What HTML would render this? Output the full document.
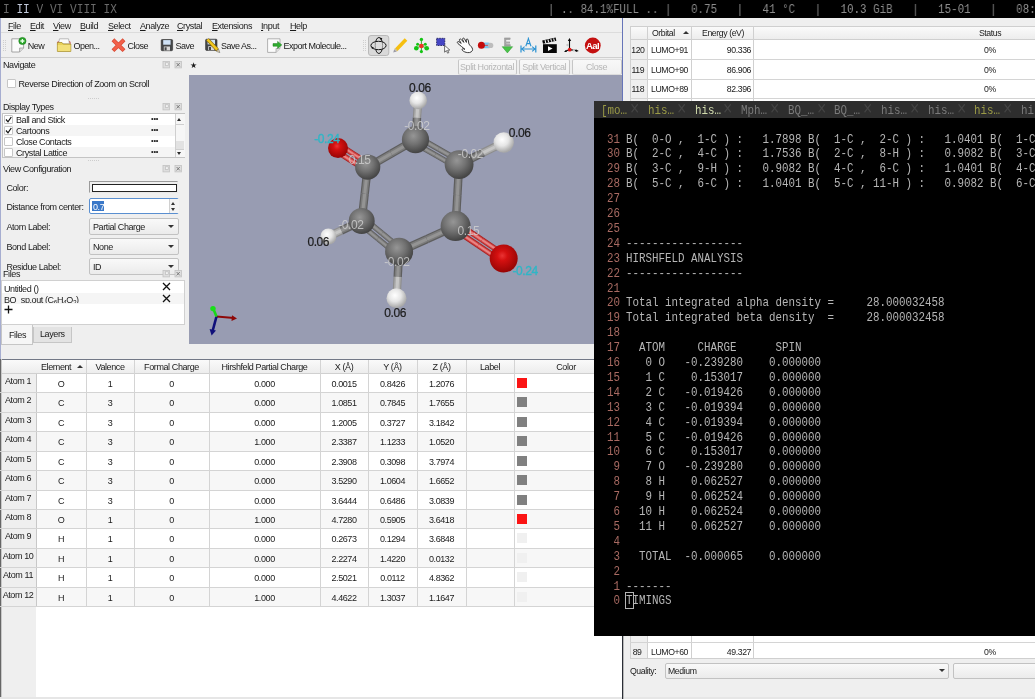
<!DOCTYPE html>
<html><head><meta charset="utf-8"><title>Avogadro</title>
<style>
html,body{margin:0;padding:0}
body{width:1035px;height:699px;position:relative;overflow:hidden;background:#efefef;font-family:"Liberation Sans",sans-serif;font-size:9px;letter-spacing:-0.4px;color:#1a1a1a}
.a{position:absolute;white-space:nowrap}
.t{position:absolute;white-space:nowrap;line-height:12px}
.mono{font-family:"Liberation Mono",monospace;letter-spacing:0}
u{text-decoration:underline;text-underline-offset:1px}
.hl{position:absolute;height:1px;background:#d4d4d4}
.vl{position:absolute;width:1px;background:#d4d4d4}
.btn{position:absolute;border:1px solid #c2c2c2;border-radius:2px;background:linear-gradient(#f9f9f9,#ebebeb);box-sizing:border-box}
.cb{position:absolute;width:9px;height:9px;border:1px solid #c6c6c6;background:#fff;border-radius:1px}
.dk{position:absolute;width:6px;height:6px;border:1px solid #c8c8c8;background:#e4e4e4;box-sizing:border-box}
</style></head><body>
<div id="root" style="position:absolute;left:0;top:0;width:1035px;height:699px;will-change:transform">

<div class="a" style="left:0;top:0;width:1035px;height:18px;background:#000"></div>
<div class="a mono" id="tb1" style="left:2.8px;top:1.6px;font-size:13.5px;line-height:15px;color:#6a6a6a;transform-origin:0 0;transform:scaleX(.827);white-space:pre">I <span style="color:#c2cadb">II</span> V VI VIII IX</div>
<div class="a mono" id="tb2" style="left:548px;top:1.6px;font-size:13.5px;line-height:15px;color:#8c8c8c;transform-origin:0 0;transform:scaleX(.8025);white-space:pre">| .. 84.1%FULL .. |   0.75   |   41 °C   |   10.3 GiB   |   15-01   |   08:</div>
<div class="a" style="left:623px;top:18px;width:412px;height:681px;background:#efefef"></div>
<div class="a" style="left:630px;top:26px;width:405px;height:633px;background:#fff"></div>
<div class="a" style="left:630px;top:26px;width:405px;height:14px;background:linear-gradient(#fafafa,#ededed);border-top:1px solid #cfcfcf;border-bottom:1px solid #cfcfcf;box-sizing:border-box"></div>
<div class="vl" style="left:630px;top:26px;height:633px;background:#d0d0d0"></div>
<div class="vl" style="left:647px;top:26px;height:633px;background:#d0d0d0"></div>
<div class="vl" style="left:691px;top:26px;height:633px;background:#d0d0d0"></div>
<div class="vl" style="left:753px;top:26px;height:633px;background:#d0d0d0"></div>
<div class="a" style="left:631px;top:40px;width:16px;height:619px;background:#efefef"></div>
<div class="hl" style="left:630px;top:59px;width:405px"></div>
<div class="t" style="left:629.4px;width:17px;text-align:center;top:44px;font-size:8.7px">120</div>
<div class="t" style="left:651px;top:44px;font-size:8.7px">LUMO+91</div>
<div class="t" style="left:691px;top:44px;width:60px;text-align:right;font-size:8.7px">90.336</div>
<div class="t" style="left:970px;top:44px;width:40px;text-align:center;font-size:8.7px">0%</div>
<div class="hl" style="left:630px;top:78.5px;width:405px"></div>
<div class="t" style="left:629.4px;width:17px;text-align:center;top:63.5px;font-size:8.7px">119</div>
<div class="t" style="left:651px;top:63.5px;font-size:8.7px">LUMO+90</div>
<div class="t" style="left:691px;top:63.5px;width:60px;text-align:right;font-size:8.7px">86.906</div>
<div class="t" style="left:970px;top:63.5px;width:40px;text-align:center;font-size:8.7px">0%</div>
<div class="hl" style="left:630px;top:97.5px;width:405px"></div>
<div class="t" style="left:629.4px;width:17px;text-align:center;top:82.5px;font-size:8.7px">118</div>
<div class="t" style="left:651px;top:82.5px;font-size:8.7px">LUMO+89</div>
<div class="t" style="left:691px;top:82.5px;width:60px;text-align:right;font-size:8.7px">82.396</div>
<div class="t" style="left:970px;top:82.5px;width:40px;text-align:center;font-size:8.7px">0%</div>
<div class="t" style="left:652px;top:27px;font-size:8.7px">Orbital</div>
<div class="a" style="left:683px;top:31px;width:0;height:0;border-left:3px solid transparent;border-right:3px solid transparent;border-bottom:3px solid #333"></div>
<div class="t" style="left:702px;top:27px;font-size:8.7px">Energy (eV)</div>
<div class="t" style="left:970px;top:27px;width:40px;text-align:center;font-size:8.7px">Status</div>
<div class="hl" style="left:630px;top:642px;width:405px"></div>
<div class="hl" style="left:630px;top:658px;width:405px;background:#cfcfcf"></div>
<div class="t" style="left:628.6px;width:17px;text-align:center;top:646px;font-size:8.7px">89</div>
<div class="t" style="left:651px;top:646px;font-size:8.7px">LUMO+60</div>
<div class="t" style="left:691px;top:646px;width:60px;text-align:right;font-size:8.7px">49.327</div>
<div class="t" style="left:970px;top:646px;width:40px;text-align:center;font-size:8.7px">0%</div>
<div class="a" style="left:623px;top:659px;width:412px;height:40px;background:#efefef"></div>
<div class="t" style="left:630px;top:665px;font-size:8.7px">Quality:</div>
<div class="btn" style="left:665px;top:663px;width:284px;height:16px"></div>
<div class="t" style="left:668px;top:665px;font-size:8.7px">Medium</div>
<div class="a" style="left:939px;top:669px;width:0;height:0;border-left:3px solid transparent;border-right:3px solid transparent;border-top:3px solid #333"></div>
<div class="btn" style="left:953px;top:663px;width:90px;height:16px"></div>
<div class="a" style="left:0;top:18px;width:623px;height:681px;background:#efefef"></div>
<div class="t" style="left:8px;top:20px"><u>F</u>ile</div>
<div class="t" style="left:30px;top:20px"><u>E</u>dit</div>
<div class="t" style="left:53px;top:20px"><u>V</u>iew</div>
<div class="t" style="left:80px;top:20px"><u>B</u>uild</div>
<div class="t" style="left:108px;top:20px"><u>S</u>elect</div>
<div class="t" style="left:140px;top:20px"><u>A</u>nalyze</div>
<div class="t" style="left:177px;top:20px"><u>C</u>rystal</div>
<div class="t" style="left:212px;top:20px"><u>E</u>xtensions</div>
<div class="t" style="left:261px;top:20px"><u>I</u>nput</div>
<div class="t" style="left:290px;top:20px"><u>H</u>elp</div>
<div class="hl" style="left:0;top:32px;width:622px;background:#dcdcdc"></div>
<div class="hl" style="left:0;top:57px;width:622px;background:#cfcfcf"></div>
<div class="t" style="left:27.8px;top:40px;letter-spacing:-0.5px">New</div>
<div class="t" style="left:73.6px;top:40px;letter-spacing:-0.5px">Open...</div>
<div class="t" style="left:127.6px;top:40px;letter-spacing:-0.5px">Close</div>
<div class="t" style="left:175.5px;top:40px;letter-spacing:-0.5px">Save</div>
<div class="t" style="left:221px;top:40px;letter-spacing:-0.5px">Save As...</div>
<div class="t" style="left:283.6px;top:40px;letter-spacing:-0.5px">Export Molecule...</div>
<svg class="a" style="left:0;top:33px" width="622" height="24" viewBox="0 33 622 24">
<rect x="3" y="40" width="1" height="1" fill="#cfcfcf"/><rect x="5" y="40" width="1" height="1" fill="#cfcfcf"/>
<rect x="3" y="42" width="1" height="1" fill="#cfcfcf"/><rect x="5" y="42" width="1" height="1" fill="#cfcfcf"/>
<rect x="3" y="44" width="1" height="1" fill="#cfcfcf"/><rect x="5" y="44" width="1" height="1" fill="#cfcfcf"/>
<rect x="3" y="46" width="1" height="1" fill="#cfcfcf"/><rect x="5" y="46" width="1" height="1" fill="#cfcfcf"/>
<rect x="3" y="48" width="1" height="1" fill="#cfcfcf"/><rect x="5" y="48" width="1" height="1" fill="#cfcfcf"/>
<rect x="3" y="50" width="1" height="1" fill="#cfcfcf"/><rect x="5" y="50" width="1" height="1" fill="#cfcfcf"/>
<rect x="363" y="40" width="1" height="1" fill="#cfcfcf"/><rect x="365" y="40" width="1" height="1" fill="#cfcfcf"/>
<rect x="363" y="42" width="1" height="1" fill="#cfcfcf"/><rect x="365" y="42" width="1" height="1" fill="#cfcfcf"/>
<rect x="363" y="44" width="1" height="1" fill="#cfcfcf"/><rect x="365" y="44" width="1" height="1" fill="#cfcfcf"/>
<rect x="363" y="46" width="1" height="1" fill="#cfcfcf"/><rect x="365" y="46" width="1" height="1" fill="#cfcfcf"/>
<rect x="363" y="48" width="1" height="1" fill="#cfcfcf"/><rect x="365" y="48" width="1" height="1" fill="#cfcfcf"/>
<rect x="363" y="50" width="1" height="1" fill="#cfcfcf"/><rect x="365" y="50" width="1" height="1" fill="#cfcfcf"/>
<path d="M11.8 38.8 H23.6 V48 L19.6 52 H11.8 Z" fill="#fbfbfb" stroke="#8f8f8f" stroke-width="0.8"/>
<path d="M23.6 48 H19.6 V52" fill="#dcdcdc" stroke="#8f8f8f" stroke-width="0.7"/>
<circle cx="22.4" cy="41" r="3.6" fill="#2aa62a" stroke="#157a15" stroke-width="0.6"/>
<path d="M20.4 41 H24.4 M22.4 39 V43" stroke="#e8ffe8" stroke-width="1.3"/>
<path d="M59.5 38.8 H68.5 L69.5 44 H58.5 Z" fill="#fdfdfd" stroke="#a0a0a0" stroke-width="0.7"/>
<path d="M57.4 42.5 H62 L63.2 44 H70.8 V51.4 H57.4 Z" fill="#e8d15a" stroke="#a89030" stroke-width="0.8"/>
<path d="M57.8 45 H70.4 V51 H57.8 Z" fill="#f3e07a"/>
<path d="M57.6 42.6 L58.4 41.2 M70.4 43.6 L69.6 41.2" stroke="#c04030" stroke-width="0.9"/>
<path d="M114.4 41.2 L122.6 49.2 M122.6 41.2 L114.4 49.2" stroke="#d84a34" stroke-width="4" stroke-linecap="square"/>
<path d="M114.4 41.2 L122.6 49.2 M122.6 41.2 L114.4 49.2" stroke="#f2604a" stroke-width="2.6" stroke-linecap="square"/>
<rect x="161.2" y="39.5" width="11.4" height="11.2" rx="1" fill="#444648" stroke="#2c2c2c" stroke-width="0.6"/>
<rect x="163.2" y="40.1" width="7.4" height="4.6" fill="#cfe2f6"/>
<rect x="163.79999999999998" y="46.5" width="6.2" height="4" fill="#d8d8d8"/>
<rect x="164.6" y="47.3" width="2" height="3" fill="#444648"/>
<rect x="205.6" y="39.2" width="11.4" height="11.2" rx="1" fill="#444648" stroke="#2c2c2c" stroke-width="0.6"/>
<rect x="207.6" y="39.800000000000004" width="7.4" height="4.6" fill="#cfe2f6"/>
<rect x="208.2" y="46.2" width="6.2" height="4" fill="#d8d8d8"/>
<rect x="209.0" y="47.0" width="2" height="3" fill="#444648"/>
<path d="M207.5 39.5 L217.5 50" stroke="#8a6a10" stroke-width="3.6"/>
<path d="M207.5 39.5 L217.2 49.7" stroke="#f2c81e" stroke-width="2.4"/>
<path d="M216.4 51.4 L219.8 52.6 L218.6 49.2 Z" fill="#e8d8b0" stroke="#555" stroke-width="0.5"/>
<path d="M267.6 38.8 H280 V48.5 L276 52.4 H267.6 Z" fill="#fbfbfb" stroke="#a0a0a0" stroke-width="0.8"/>
<path d="M280 48.5 H276 V52.4" fill="#dcdcdc" stroke="#a0a0a0" stroke-width="0.7"/>
<path d="M273 43.6 H277.6 V41.4 L281.8 44.9 L277.6 48.4 V46.2 H273 Z" fill="#2fae2f" stroke="#1a7a1a" stroke-width="0.5"/>
<rect x="368.5" y="35.5" width="20.3" height="20" rx="2.5" fill="#d9d9d9" stroke="#b9b9b9" stroke-width="1"/>
<ellipse cx="378.9" cy="45.5" rx="3.7" ry="8" fill="none" stroke="#151515" stroke-width="1"/>
<ellipse cx="378.5" cy="45.5" rx="7.6" ry="4.2" fill="#dedede" fill-opacity="0.6" stroke="#151515" stroke-width="1"/>
<path d="M379.6 37.6 L382.4 38.2 L381 40.4 Z M371.4 46.4 L372 49 L374 47.4 Z" fill="#151515"/>
<path d="M396 50 L406 39.6" stroke="#f6bf10" stroke-width="3.6"/>
<path d="M393.2 52.6 L394.2 49.2 L396.8 51.6 Z" fill="#9a9aa6"/>
<path d="M394.2 49.2 L395.2 48.1 L397.8 50.6 L396.8 51.6 Z" fill="#d0c090"/>
<path d="M421.4 46 V39.3 M421.4 46 V51.5 M421.4 46 L416.2 48 M421.4 46 L426.8 48 M421.4 46 L417.5 44 M421.4 46 L425.4 44" stroke="#20a020" stroke-width="0.9"/>
<circle cx="421.4" cy="39.4" r="1.7" fill="#14c414"/>
<circle cx="421.4" cy="51.6" r="1.6" fill="#14c414"/>
<circle cx="416.3" cy="48.2" r="2.3" fill="#14c414"/>
<circle cx="426.7" cy="48.2" r="2.3" fill="#14c414"/>
<circle cx="417.6" cy="44.2" r="1.5" fill="#14c414"/>
<circle cx="425.3" cy="44.2" r="1.5" fill="#14c414"/>
<circle cx="421.4" cy="46" r="2.3" fill="#ee3524"/>
<rect x="436.6" y="38.3" width="8.2" height="7.2" fill="#4444c4" stroke="#1a1a50" stroke-width="0.8" stroke-dasharray="1.6 1"/>
<path d="M444.6 45.4 L444.6 52.2 L446.4 50.6 L447.6 53.2 L448.8 52.6 L447.6 50.2 L449.8 50 Z" fill="#fff" stroke="#333" stroke-width="0.7"/>
<path d="M458 43.6 C456.6 42.4 457.6 41 459 41.8 L461.2 43.4 L459.6 40.6 C458.8 39.2 460.4 38.4 461.4 39.6 L463.8 42.4 L462.6 39.4 C462.2 38 464 37.6 464.6 39 L466.4 42.4 L466.2 40 C466.2 38.6 468 38.8 468.2 40 L469 44.4 C470.6 45.6 472.4 47.6 472.6 49.4 C472.8 51.4 470.2 53 467.6 52.6 C465.6 52.4 463.6 51.6 462.6 50.6 C461.4 49.6 462.4 48.2 463.8 48.8 L465 49.4 C463 47.6 460 45.4 458 43.6 Z" fill="#fdfdfd" stroke="#222" stroke-width="0.9" stroke-linejoin="round"/>
<rect x="482" y="42.6" width="9" height="5.6" rx="2.8" fill="#7cc6ec"/>
<path d="M482 45.4 H490" stroke="#e03030" stroke-width="0.8"/>
<circle cx="490.6" cy="45.4" r="2.7" fill="#bdbdbd"/>
<circle cx="481.4" cy="45.3" r="3.5" fill="#c40c0c"/>
<text x="503.8" y="46" font-family="Liberation Sans,sans-serif" font-weight="bold" font-size="10.5" fill="#a8a8a8" stroke="#808080" stroke-width="0.3">E</text>
<path d="M502.2 46.7 H512.6 L507.4 52.9 Z" fill="#48c448" stroke="#2e962e" stroke-width="0.5"/>
<path d="M521 45.4 V52.4 M535.8 45.4 V52.4 M521.6 49 H535.2" stroke="#2a92d2" stroke-width="1.2" fill="none"/>
<path d="M524.6 46.6 L521.9 49 L524.6 51.4 M532.2 46.6 L534.9 49 L532.2 51.4" stroke="#2a92d2" stroke-width="1.1" fill="none"/>
<path d="M525.8 46.2 L528.4 38.6 L531 46.2 M526.9 43.6 H529.9 M528.4 38.6 V37.6" stroke="#2a92d2" stroke-width="1.1" fill="none"/>
<rect x="543" y="44.2" width="13.8" height="8.8" fill="#060606"/>
<path d="M542.2 40.6 L555.6 37.6 L556.4 40.8 L543 43.8 Z" fill="#060606"/>
<path d="M545 40.2 L545.8 43 M547.9 39.5 L548.7 42.4 M550.8 38.9 L551.6 41.7 M553.6 38.3 L554.4 41.1" stroke="#f4f4f4" stroke-width="1.1"/>
<path d="M548 46.2 L552.6 48.6 L548 51 Z" fill="#fff"/>
<path d="M569.5 50.4 V40" stroke="#0a0a0a" stroke-width="1.1"/><path d="M567.8 41 L569.5 38 L571.2 41 Z" fill="#0a0a0a"/>
<path d="M569.5 49.6 L565.6 51.2 M569.5 49.6 L576.4 50.6" stroke="#0a0a0a" stroke-width="1.1"/>
<path d="M564 51.9 L566.2 49.8 L566.8 52 Z M578.8 50.9 L575.8 49.2 L575.8 52 Z" fill="#0a0a0a"/>
<circle cx="567.6" cy="45" r="1.2" fill="#c8c8c8"/><circle cx="573.8" cy="50.4" r="1.2" fill="#c8c8c8"/>
<circle cx="569.7" cy="49.7" r="1.9" fill="#e01818"/>
<circle cx="592.8" cy="45.5" r="7.9" fill="#c41010"/>
<text x="592.5" y="48.9" text-anchor="middle" font-family="Liberation Sans,sans-serif" font-weight="bold" font-size="9.6" letter-spacing="-0.7" fill="#fff">AaI</text>
</svg>
<div class="t" style="left:3px;top:59px">Navigate</div>
<div class="cb" style="left:6.5px;top:79px;width:7px;height:7px"></div>
<div class="t" style="left:18.5px;top:78px">Reverse Direction of Zoom on Scroll</div>
<div class="t" style="left:3px;top:101px">Display Types</div>
<div class="t" style="left:3px;top:163px">View Configuration</div>
<svg class="a" style="left:162px;top:61px" width="21" height="8" viewBox="0 0 21 8"><rect x="1" y="0.5" width="6.4" height="6.4" fill="#dedede" stroke="#c2c2c2" stroke-width="0.8"/><rect x="3.4" y="1.8" width="2.8" height="2.8" fill="#f2f2f2" stroke="#b4b4b4" stroke-width="0.6"/><rect x="13" y="0.5" width="6.4" height="6.4" fill="#dedede" stroke="#c2c2c2" stroke-width="0.8"/><path d="M14.6 2 L17.8 5.4 M17.8 2 L14.6 5.4" stroke="#666" stroke-width="0.8"/></svg>
<svg class="a" style="left:162px;top:103.4px" width="21" height="8" viewBox="0 0 21 8"><rect x="1" y="0.5" width="6.4" height="6.4" fill="#dedede" stroke="#c2c2c2" stroke-width="0.8"/><rect x="3.4" y="1.8" width="2.8" height="2.8" fill="#f2f2f2" stroke="#b4b4b4" stroke-width="0.6"/><rect x="13" y="0.5" width="6.4" height="6.4" fill="#dedede" stroke="#c2c2c2" stroke-width="0.8"/><path d="M14.6 2 L17.8 5.4 M17.8 2 L14.6 5.4" stroke="#666" stroke-width="0.8"/></svg>
<svg class="a" style="left:162px;top:165px" width="21" height="8" viewBox="0 0 21 8"><rect x="1" y="0.5" width="6.4" height="6.4" fill="#dedede" stroke="#c2c2c2" stroke-width="0.8"/><rect x="3.4" y="1.8" width="2.8" height="2.8" fill="#f2f2f2" stroke="#b4b4b4" stroke-width="0.6"/><rect x="13" y="0.5" width="6.4" height="6.4" fill="#dedede" stroke="#c2c2c2" stroke-width="0.8"/><path d="M14.6 2 L17.8 5.4 M17.8 2 L14.6 5.4" stroke="#666" stroke-width="0.8"/></svg>
<div class="a" style="left:1.5px;top:113.4px;width:183px;height:45px;background:#fff;border:1px solid #c4c4c4;box-sizing:border-box"></div>
<div class="a" style="left:3px;top:125px;width:172px;height:11px;background:#f5f5f5"></div>
<div class="a" style="left:3px;top:147px;width:172px;height:10px;background:#f5f5f5"></div>
<div class="cb" style="left:4px;top:115px;width:7px;height:7px"></div>
<svg class="a" style="left:4px;top:115px" width="9" height="9"><path d="M2 4.5 L4 6.8 L7.3 2" stroke="#111" stroke-width="1.2" fill="none"/></svg>
<div class="t" style="left:16px;top:113.8px">Ball and Stick</div>
<div class="t" style="left:151px;top:112.8px;letter-spacing:-0.2px;font-size:7.5px;color:#222">•••</div>
<div class="cb" style="left:4px;top:126px;width:7px;height:7px"></div>
<svg class="a" style="left:4px;top:126px" width="9" height="9"><path d="M2 4.5 L4 6.8 L7.3 2" stroke="#111" stroke-width="1.2" fill="none"/></svg>
<div class="t" style="left:16px;top:124.8px">Cartoons</div>
<div class="t" style="left:151px;top:123.8px;letter-spacing:-0.2px;font-size:7.5px;color:#222">•••</div>
<div class="cb" style="left:4px;top:137px;width:7px;height:7px"></div>
<div class="t" style="left:16px;top:135.8px">Close Contacts</div>
<div class="t" style="left:151px;top:134.8px;letter-spacing:-0.2px;font-size:7.5px;color:#222">•••</div>
<div class="cb" style="left:4px;top:148px;width:7px;height:7px"></div>
<div class="t" style="left:16px;top:146.8px">Crystal Lattice</div>
<div class="t" style="left:151px;top:145.8px;letter-spacing:-0.2px;font-size:7.5px;color:#222">•••</div>
<div class="a" style="left:175px;top:114.4px;width:8.6px;height:43px;background:#f6f6f6;border-left:1px solid #cfcfcf"></div>
<div class="a" style="left:175px;top:124px;width:9px;height:1px;background:#cfcfcf"></div><div class="a" style="left:175px;top:149px;width:9px;height:1px;background:#cfcfcf"></div>
<div class="a" style="left:177.4px;top:117.6px;width:0;height:0;border-left:2.6px solid transparent;border-right:2.6px solid transparent;border-bottom:3px solid #2a2a2a"></div>
<div class="a" style="left:177.4px;top:152px;width:0;height:0;border-left:2.6px solid transparent;border-right:2.6px solid transparent;border-top:3px solid #2a2a2a"></div>
<div class="a" style="left:176px;top:141px;width:8px;height:8px;background:#e2e2e2"></div>
<div class="a" style="left:88px;top:98px;width:11px;height:1px;background:repeating-linear-gradient(90deg,#cdcdcd 0 1px,transparent 1px 2px)"></div>
<div class="a" style="left:88px;top:160px;width:11px;height:1px;background:repeating-linear-gradient(90deg,#cdcdcd 0 1px,transparent 1px 2px)"></div>
<div class="t" style="left:6.4px;top:181.7px">Color:</div>
<div class="t" style="left:6.4px;top:200.7px">Distance from center:</div>
<div class="t" style="left:6.4px;top:220.7px">Atom Label:</div>
<div class="t" style="left:6.4px;top:240.7px">Bond Label:</div>
<div class="t" style="left:6.4px;top:260.8px">Residue Label:</div>
<div class="a" style="left:89px;top:181px;width:89px;height:12px;border:1px solid #9a9a9a;border-right-color:#e8e8e8;border-bottom-color:#e8e8e8;box-sizing:border-box"></div>
<div class="a" style="left:92px;top:184px;width:85px;height:8px;border:1px solid #222;background:#fff;box-sizing:border-box"></div>
<div class="a" style="left:89px;top:198px;width:90px;height:16px;border:1px solid #5a8fd0;border-radius:2px;background:#fff;box-sizing:border-box"></div>
<div class="a" style="left:92px;top:201px;width:12px;height:10px;background:#3a78c8"></div>
<div class="t" style="left:93px;top:200.7px;color:#fff">0.7</div>
<div class="a" style="left:169px;top:199px;width:9px;height:14px;background:#f3f3f3;border-left:1px solid #d0d0d0"></div>
<div class="a" style="left:171px;top:202px;width:0;height:0;border-left:2.5px solid transparent;border-right:2.5px solid transparent;border-bottom:3px solid #333"></div>
<div class="a" style="left:171px;top:208px;width:0;height:0;border-left:2.5px solid transparent;border-right:2.5px solid transparent;border-top:3px solid #333"></div>
<div class="btn" style="left:89px;top:218px;width:90px;height:17px"></div>
<div class="t" style="left:93px;top:220.6px">Partial Charge</div>
<div class="a" style="left:168px;top:225px;width:0;height:0;border-left:3px solid transparent;border-right:3px solid transparent;border-top:3px solid #333"></div>
<div class="btn" style="left:89px;top:238px;width:90px;height:17px"></div>
<div class="t" style="left:93px;top:240.6px">None</div>
<div class="a" style="left:168px;top:245px;width:0;height:0;border-left:3px solid transparent;border-right:3px solid transparent;border-top:3px solid #333"></div>
<div class="btn" style="left:89px;top:258px;width:90px;height:17px"></div>
<div class="t" style="left:93px;top:260.6px">ID</div>
<div class="a" style="left:168px;top:265px;width:0;height:0;border-left:3px solid transparent;border-right:3px solid transparent;border-top:3px solid #333"></div>
<div class="t" style="left:3px;top:268px">Files</div>
<svg class="a" style="left:162px;top:270px" width="21" height="8" viewBox="0 0 21 8"><rect x="1" y="0.5" width="6.4" height="6.4" fill="#dedede" stroke="#c2c2c2" stroke-width="0.8"/><rect x="3.4" y="1.8" width="2.8" height="2.8" fill="#f2f2f2" stroke="#b4b4b4" stroke-width="0.6"/><rect x="13" y="0.5" width="6.4" height="6.4" fill="#dedede" stroke="#c2c2c2" stroke-width="0.8"/><path d="M14.6 2 L17.8 5.4 M17.8 2 L14.6 5.4" stroke="#666" stroke-width="0.8"/></svg>
<div class="a" style="left:1px;top:280px;width:184px;height:45px;background:#fff;border:1px solid #d0d0d0;box-sizing:border-box"></div>
<div class="a" style="left:2px;top:293px;width:182px;height:11px;background:#f5f5f5"></div>
<div class="t" style="left:4px;top:283px">Untitled ()</div>
<div class="a" style="left:4px;top:294px;height:9px;overflow:hidden"><div style="line-height:12px">BQ_sp.out (C<sub style="font-size:6.5px;vertical-align:-1.5px;line-height:0">6</sub>H<sub style="font-size:6.5px;vertical-align:-1.5px;line-height:0">4</sub>O<sub style="font-size:6.5px;vertical-align:-1.5px;line-height:0">2</sub>)</div></div>
<svg class="a" style="left:162px;top:282px" width="9" height="9"><path d="M1 1 L8 8 M8 1 L1 8" stroke="#111" stroke-width="1.3"/></svg>
<svg class="a" style="left:162px;top:294px" width="9" height="9"><path d="M1 1 L8 8 M8 1 L1 8" stroke="#111" stroke-width="1.3"/></svg>
<svg class="a" style="left:4px;top:305px" width="9" height="9"><path d="M4.5 0.5 V8.5 M0.5 4.5 H8.5" stroke="#111" stroke-width="1.3"/></svg>
<div class="a" style="left:33px;top:327px;width:39px;height:16px;background:#e3e3e3;border:1px solid #c6c6c6;border-top:none;box-sizing:border-box"></div>
<div class="a" style="left:1px;top:325px;width:32px;height:20px;background:#f6f6f6;border:1px solid #c6c6c6;border-top:none;box-sizing:border-box"></div>
<div class="t" style="left:9px;top:329px">Files</div>
<div class="t" style="left:40px;top:328px">Layers</div>
<div class="t" style="left:190px;top:60px;font-size:8px;letter-spacing:0">★</div>
<div class="btn" style="left:457.5px;top:58.5px;width:59px;height:16px;border-color:#dadada #c6c6c6 #dcdcdc #c6c6c6;background:linear-gradient(#f8f8f8,#f0f0f0)"></div>
<div class="t" style="left:457.5px;top:60.6px;width:59px;text-align:center;color:#b6b6b6">Split Horizontal</div>
<div class="btn" style="left:519px;top:58.5px;width:50.5px;height:16px;border-color:#dadada #c6c6c6 #dcdcdc #c6c6c6;background:linear-gradient(#f8f8f8,#f0f0f0)"></div>
<div class="t" style="left:519px;top:60.6px;width:50.5px;text-align:center;color:#b6b6b6">Split Vertical</div>
<div class="btn" style="left:571.5px;top:58.5px;width:50px;height:16px;border-color:#dadada #c6c6c6 #dcdcdc #c6c6c6;background:linear-gradient(#f8f8f8,#f0f0f0)"></div>
<div class="t" style="left:571.5px;top:60.6px;width:50px;text-align:center;color:#b6b6b6">Close</div>
<div class="a" style="left:189px;top:75px;width:433px;height:268.6px;background:#989cb2"></div>
<svg class="a" style="left:189px;top:75px" width="429" height="268" viewBox="189 75 429 268">
<defs>
<radialGradient id="gC" cx="0.42" cy="0.36" r="0.62"><stop offset="0" stop-color="#969696"/><stop offset="0.5" stop-color="#727272"/><stop offset="1" stop-color="#464646"/></radialGradient>
<radialGradient id="gH" cx="0.42" cy="0.36" r="0.62"><stop offset="0" stop-color="#ffffff"/><stop offset="0.5" stop-color="#e6e6e6"/><stop offset="1" stop-color="#a8a8a8"/></radialGradient>
<radialGradient id="gO" cx="0.45" cy="0.4" r="0.6"><stop offset="0" stop-color="#ea3434"/><stop offset="0.3" stop-color="#d41010"/><stop offset="1" stop-color="#960404"/></radialGradient>
</defs>
<line x1="415.5" y1="139.7" x2="417.0" y2="117.7" stroke="#5e5e5e" stroke-width="8.4"/>
<line x1="415.5" y1="139.7" x2="417.0" y2="117.7" stroke="#7c7c7c" stroke-width="6.05"/>
<line x1="415.5" y1="139.7" x2="417.0" y2="117.7" stroke="#949494" stroke-width="3.02"/>
<line x1="417.0" y1="117.7" x2="418.2" y2="100.4" stroke="#8e8e8e" stroke-width="8.4"/>
<line x1="417.0" y1="117.7" x2="418.2" y2="100.4" stroke="#adadad" stroke-width="6.05"/>
<line x1="417.0" y1="117.7" x2="418.2" y2="100.4" stroke="#c6c6c6" stroke-width="3.02"/>
<line x1="459.1" y1="164.6" x2="483.3" y2="152.6" stroke="#5e5e5e" stroke-width="8.4"/>
<line x1="459.1" y1="164.6" x2="483.3" y2="152.6" stroke="#7c7c7c" stroke-width="6.05"/>
<line x1="459.1" y1="164.6" x2="483.3" y2="152.6" stroke="#949494" stroke-width="3.02"/>
<line x1="483.3" y1="152.6" x2="503.7" y2="142.5" stroke="#8e8e8e" stroke-width="8.4"/>
<line x1="483.3" y1="152.6" x2="503.7" y2="142.5" stroke="#adadad" stroke-width="6.05"/>
<line x1="483.3" y1="152.6" x2="503.7" y2="142.5" stroke="#c6c6c6" stroke-width="3.02"/>
<line x1="361.7" y1="221.0" x2="341.1" y2="230.6" stroke="#5e5e5e" stroke-width="8.4"/>
<line x1="361.7" y1="221.0" x2="341.1" y2="230.6" stroke="#7c7c7c" stroke-width="6.05"/>
<line x1="361.7" y1="221.0" x2="341.1" y2="230.6" stroke="#949494" stroke-width="3.02"/>
<line x1="341.1" y1="230.6" x2="328.4" y2="236.5" stroke="#8e8e8e" stroke-width="8.4"/>
<line x1="341.1" y1="230.6" x2="328.4" y2="236.5" stroke="#adadad" stroke-width="6.05"/>
<line x1="341.1" y1="230.6" x2="328.4" y2="236.5" stroke="#c6c6c6" stroke-width="3.02"/>
<line x1="399.1" y1="251.7" x2="397.7" y2="276.9" stroke="#5e5e5e" stroke-width="8.4"/>
<line x1="399.1" y1="251.7" x2="397.7" y2="276.9" stroke="#7c7c7c" stroke-width="6.05"/>
<line x1="399.1" y1="251.7" x2="397.7" y2="276.9" stroke="#949494" stroke-width="3.02"/>
<line x1="397.7" y1="276.9" x2="396.5" y2="298.2" stroke="#8e8e8e" stroke-width="8.4"/>
<line x1="397.7" y1="276.9" x2="396.5" y2="298.2" stroke="#adadad" stroke-width="6.05"/>
<line x1="397.7" y1="276.9" x2="396.5" y2="298.2" stroke="#c6c6c6" stroke-width="3.02"/>
<line x1="415.5" y1="139.7" x2="391.2" y2="153.6" stroke="#5e5e5e" stroke-width="8.4"/>
<line x1="415.5" y1="139.7" x2="391.2" y2="153.6" stroke="#7c7c7c" stroke-width="6.05"/>
<line x1="415.5" y1="139.7" x2="391.2" y2="153.6" stroke="#949494" stroke-width="3.02"/>
<line x1="391.2" y1="153.6" x2="367.7" y2="167.1" stroke="#5e5e5e" stroke-width="8.4"/>
<line x1="391.2" y1="153.6" x2="367.7" y2="167.1" stroke="#7c7c7c" stroke-width="6.05"/>
<line x1="391.2" y1="153.6" x2="367.7" y2="167.1" stroke="#949494" stroke-width="3.02"/>
<line x1="367.7" y1="167.1" x2="364.7" y2="193.9" stroke="#5e5e5e" stroke-width="8.4"/>
<line x1="367.7" y1="167.1" x2="364.7" y2="193.9" stroke="#7c7c7c" stroke-width="6.05"/>
<line x1="367.7" y1="167.1" x2="364.7" y2="193.9" stroke="#949494" stroke-width="3.02"/>
<line x1="364.7" y1="193.9" x2="361.7" y2="221.0" stroke="#5e5e5e" stroke-width="8.4"/>
<line x1="364.7" y1="193.9" x2="361.7" y2="221.0" stroke="#7c7c7c" stroke-width="6.05"/>
<line x1="364.7" y1="193.9" x2="361.7" y2="221.0" stroke="#949494" stroke-width="3.02"/>
<line x1="459.1" y1="164.6" x2="457.4" y2="195.1" stroke="#5e5e5e" stroke-width="8.4"/>
<line x1="459.1" y1="164.6" x2="457.4" y2="195.1" stroke="#7c7c7c" stroke-width="6.05"/>
<line x1="459.1" y1="164.6" x2="457.4" y2="195.1" stroke="#949494" stroke-width="3.02"/>
<line x1="457.4" y1="195.1" x2="455.6" y2="226.1" stroke="#5e5e5e" stroke-width="8.4"/>
<line x1="457.4" y1="195.1" x2="455.6" y2="226.1" stroke="#7c7c7c" stroke-width="6.05"/>
<line x1="457.4" y1="195.1" x2="455.6" y2="226.1" stroke="#949494" stroke-width="3.02"/>
<line x1="399.1" y1="251.7" x2="426.9" y2="239.1" stroke="#5e5e5e" stroke-width="8.4"/>
<line x1="399.1" y1="251.7" x2="426.9" y2="239.1" stroke="#7c7c7c" stroke-width="6.05"/>
<line x1="399.1" y1="251.7" x2="426.9" y2="239.1" stroke="#949494" stroke-width="3.02"/>
<line x1="426.9" y1="239.1" x2="455.6" y2="226.1" stroke="#5e5e5e" stroke-width="8.4"/>
<line x1="426.9" y1="239.1" x2="455.6" y2="226.1" stroke="#7c7c7c" stroke-width="6.05"/>
<line x1="426.9" y1="239.1" x2="455.6" y2="226.1" stroke="#949494" stroke-width="3.02"/>
<line x1="417.2" y1="136.7" x2="438.6" y2="149.0" stroke="#5e5e5e" stroke-width="5.6"/>
<line x1="417.2" y1="136.7" x2="438.6" y2="149.0" stroke="#7c7c7c" stroke-width="4.03"/>
<line x1="417.2" y1="136.7" x2="438.6" y2="149.0" stroke="#949494" stroke-width="2.02"/>
<line x1="438.6" y1="149.0" x2="460.8" y2="161.6" stroke="#5e5e5e" stroke-width="5.6"/>
<line x1="438.6" y1="149.0" x2="460.8" y2="161.6" stroke="#7c7c7c" stroke-width="4.03"/>
<line x1="438.6" y1="149.0" x2="460.8" y2="161.6" stroke="#949494" stroke-width="2.02"/>
<line x1="413.8" y1="142.7" x2="435.3" y2="154.9" stroke="#5e5e5e" stroke-width="5.6"/>
<line x1="413.8" y1="142.7" x2="435.3" y2="154.9" stroke="#7c7c7c" stroke-width="4.03"/>
<line x1="413.8" y1="142.7" x2="435.3" y2="154.9" stroke="#949494" stroke-width="2.02"/>
<line x1="435.3" y1="154.9" x2="457.4" y2="167.6" stroke="#5e5e5e" stroke-width="5.6"/>
<line x1="435.3" y1="154.9" x2="457.4" y2="167.6" stroke="#7c7c7c" stroke-width="4.03"/>
<line x1="435.3" y1="154.9" x2="457.4" y2="167.6" stroke="#949494" stroke-width="2.02"/>
<line x1="363.9" y1="218.4" x2="382.2" y2="233.4" stroke="#5e5e5e" stroke-width="5.6"/>
<line x1="363.9" y1="218.4" x2="382.2" y2="233.4" stroke="#7c7c7c" stroke-width="4.03"/>
<line x1="363.9" y1="218.4" x2="382.2" y2="233.4" stroke="#949494" stroke-width="2.02"/>
<line x1="382.2" y1="233.4" x2="401.3" y2="249.1" stroke="#5e5e5e" stroke-width="5.6"/>
<line x1="382.2" y1="233.4" x2="401.3" y2="249.1" stroke="#7c7c7c" stroke-width="4.03"/>
<line x1="382.2" y1="233.4" x2="401.3" y2="249.1" stroke="#949494" stroke-width="2.02"/>
<line x1="359.5" y1="223.6" x2="377.9" y2="238.7" stroke="#5e5e5e" stroke-width="5.6"/>
<line x1="359.5" y1="223.6" x2="377.9" y2="238.7" stroke="#7c7c7c" stroke-width="4.03"/>
<line x1="359.5" y1="223.6" x2="377.9" y2="238.7" stroke="#949494" stroke-width="2.02"/>
<line x1="377.9" y1="238.7" x2="396.9" y2="254.3" stroke="#5e5e5e" stroke-width="5.6"/>
<line x1="377.9" y1="238.7" x2="396.9" y2="254.3" stroke="#7c7c7c" stroke-width="4.03"/>
<line x1="377.9" y1="238.7" x2="396.9" y2="254.3" stroke="#949494" stroke-width="2.02"/>
<line x1="365.9" y1="170.0" x2="349.9" y2="159.8" stroke="#a82020" stroke-width="5.6"/>
<line x1="365.9" y1="170.0" x2="349.9" y2="159.8" stroke="#d04444" stroke-width="4.03"/>
<line x1="365.9" y1="170.0" x2="349.9" y2="159.8" stroke="#e88484" stroke-width="2.02"/>
<line x1="349.9" y1="159.8" x2="336.2" y2="151.0" stroke="#a82020" stroke-width="5.6"/>
<line x1="349.9" y1="159.8" x2="336.2" y2="151.0" stroke="#d04444" stroke-width="4.03"/>
<line x1="349.9" y1="159.8" x2="336.2" y2="151.0" stroke="#e88484" stroke-width="2.02"/>
<line x1="369.5" y1="164.2" x2="353.6" y2="154.0" stroke="#a82020" stroke-width="5.6"/>
<line x1="369.5" y1="164.2" x2="353.6" y2="154.0" stroke="#d04444" stroke-width="4.03"/>
<line x1="369.5" y1="164.2" x2="353.6" y2="154.0" stroke="#e88484" stroke-width="2.02"/>
<line x1="353.6" y1="154.0" x2="339.8" y2="145.2" stroke="#a82020" stroke-width="5.6"/>
<line x1="353.6" y1="154.0" x2="339.8" y2="145.2" stroke="#d04444" stroke-width="4.03"/>
<line x1="353.6" y1="154.0" x2="339.8" y2="145.2" stroke="#e88484" stroke-width="2.02"/>
<line x1="457.5" y1="223.3" x2="482.0" y2="239.8" stroke="#a82020" stroke-width="5.6"/>
<line x1="457.5" y1="223.3" x2="482.0" y2="239.8" stroke="#d04444" stroke-width="4.03"/>
<line x1="457.5" y1="223.3" x2="482.0" y2="239.8" stroke="#e88484" stroke-width="2.02"/>
<line x1="482.0" y1="239.8" x2="505.6" y2="255.7" stroke="#a82020" stroke-width="5.6"/>
<line x1="482.0" y1="239.8" x2="505.6" y2="255.7" stroke="#d04444" stroke-width="4.03"/>
<line x1="482.0" y1="239.8" x2="505.6" y2="255.7" stroke="#e88484" stroke-width="2.02"/>
<line x1="453.7" y1="228.9" x2="478.2" y2="245.4" stroke="#a82020" stroke-width="5.6"/>
<line x1="453.7" y1="228.9" x2="478.2" y2="245.4" stroke="#d04444" stroke-width="4.03"/>
<line x1="453.7" y1="228.9" x2="478.2" y2="245.4" stroke="#e88484" stroke-width="2.02"/>
<line x1="478.2" y1="245.4" x2="501.8" y2="261.3" stroke="#a82020" stroke-width="5.6"/>
<line x1="478.2" y1="245.4" x2="501.8" y2="261.3" stroke="#d04444" stroke-width="4.03"/>
<line x1="478.2" y1="245.4" x2="501.8" y2="261.3" stroke="#e88484" stroke-width="2.02"/>
<circle cx="328.4" cy="236.5" r="8" fill="url(#gH)"/>
<circle cx="338" cy="148.1" r="10" fill="url(#gO)"/>
<circle cx="367.7" cy="167.1" r="12.6" fill="url(#gC)"/>
<circle cx="361.7" cy="221" r="13" fill="url(#gC)"/>
<circle cx="418.2" cy="100.4" r="8.8" fill="url(#gH)"/>
<circle cx="415.5" cy="139.7" r="13.6" fill="url(#gC)"/>
<circle cx="396.5" cy="298.2" r="10" fill="url(#gH)"/>
<circle cx="399.1" cy="251.7" r="14" fill="url(#gC)"/>
<circle cx="459.1" cy="164.6" r="14.4" fill="url(#gC)"/>
<circle cx="503.7" cy="142.5" r="10.2" fill="url(#gH)"/>
<circle cx="455.6" cy="226.1" r="15" fill="url(#gC)"/>
<circle cx="503.7" cy="258.5" r="14" fill="url(#gO)"/>
<text x="409.1" y="92.1" font-family="Liberation Sans,sans-serif" font-size="12" fill="#1c1c1c" fill-opacity="1" stroke="#1c1c1c" stroke-width="0.2">0.06</text>
<text x="508.7" y="137" font-family="Liberation Sans,sans-serif" font-size="12" fill="#1c1c1c" fill-opacity="1" stroke="#1c1c1c" stroke-width="0.2">0.06</text>
<text x="307.4" y="246" font-family="Liberation Sans,sans-serif" font-size="12" fill="#1c1c1c" fill-opacity="1" stroke="#1c1c1c" stroke-width="0.2">0.06</text>
<text x="384.3" y="316.9" font-family="Liberation Sans,sans-serif" font-size="12" fill="#1c1c1c" fill-opacity="1" stroke="#1c1c1c" stroke-width="0.2">0.06</text>
<text x="404.2" y="129.8" font-family="Liberation Sans,sans-serif" font-size="12" fill="#d2d2d2" fill-opacity="0.8">-0.02</text>
<text x="457.8" y="158.3" font-family="Liberation Sans,sans-serif" font-size="12" fill="#d2d2d2" fill-opacity="0.8">-0.02</text>
<text x="338.2" y="228.7" font-family="Liberation Sans,sans-serif" font-size="12" fill="#d2d2d2" fill-opacity="0.8">-0.02</text>
<text x="384.2" y="266.3" font-family="Liberation Sans,sans-serif" font-size="12" fill="#d2d2d2" fill-opacity="0.8">-0.02</text>
<text x="348.8" y="163.8" font-family="Liberation Sans,sans-serif" font-size="12" fill="#d2d2d2" fill-opacity="0.8">0.15</text>
<text x="457.5" y="235.3" font-family="Liberation Sans,sans-serif" font-size="12" fill="#d2d2d2" fill-opacity="0.8">0.15</text>
<text x="314.2" y="142.8" font-family="Liberation Sans,sans-serif" font-size="12" fill="#2fb6c6" fill-opacity="1" stroke="#2fb6c6" stroke-width="0.35">-0.24</text>
<text x="512.4" y="275.4" font-family="Liberation Sans,sans-serif" font-size="12" fill="#2fb6c6" fill-opacity="1" stroke="#2fb6c6" stroke-width="0.35">-0.24</text>
<path d="M216.5 316.5 L234 318" stroke="#8e0808" stroke-width="1.8"/><path d="M232 315.2 L237 318.6 L231.5 321 Z" fill="#8e0808"/>
<path d="M216.5 316.5 L212.6 331" stroke="#10107a" stroke-width="2.6"/><path d="M209.6 329 L216 330.5 L211.6 335.5 Z" fill="#10107a"/>
<path d="M216.5 316.5 L213.4 309" stroke="#18d818" stroke-width="2.6"/><circle cx="213" cy="308.6" r="2.7" fill="#18e018"/>
</svg>
<div class="a" style="left:0;top:359px;width:622px;height:338px;background:#fff"></div>
<div class="a" style="left:0;top:359px;width:622px;height:1px;background:#727886"></div>
<div class="a" style="left:0;top:360px;width:622px;height:14px;background:linear-gradient(#fafafa,#ededed);border-bottom:1px solid #d0d0d0;box-sizing:border-box"></div>
<div class="a" style="left:0;top:374px;width:36px;height:323px;background:#efefef"></div>
<div class="a" style="left:0;top:359px;width:1px;height:340px;background:#666"></div><div class="a" style="left:1px;top:359px;width:1px;height:340px;background:#c8c8c8"></div>
<div class="t" style="left:41px;top:361px">Element</div>
<div class="a" style="left:77px;top:365px;width:0;height:0;border-left:3px solid transparent;border-right:3px solid transparent;border-bottom:3px solid #333"></div>
<div class="t" style="left:86px;top:361px;width:48px;text-align:center">Valence</div>
<div class="t" style="left:134px;top:361px;width:75px;text-align:center">Formal Charge</div>
<div class="t" style="left:209px;top:361px;width:111px;text-align:center">Hirshfeld Partial Charge</div>
<div class="t" style="left:320px;top:361px;width:48px;text-align:center">X (Å)</div>
<div class="t" style="left:368px;top:361px;width:49px;text-align:center">Y (Å)</div>
<div class="t" style="left:417px;top:361px;width:49px;text-align:center">Z (Å)</div>
<div class="t" style="left:466px;top:361px;width:48px;text-align:center">Label</div>
<div class="t" style="left:514px;top:361px;width:104px;text-align:center">Color</div>
<div class="vl" style="left:86px;top:360px;height:246px"></div>
<div class="vl" style="left:134px;top:360px;height:246px"></div>
<div class="vl" style="left:209px;top:360px;height:246px"></div>
<div class="vl" style="left:320px;top:360px;height:246px"></div>
<div class="vl" style="left:368px;top:360px;height:246px"></div>
<div class="vl" style="left:417px;top:360px;height:246px"></div>
<div class="vl" style="left:466px;top:360px;height:246px"></div>
<div class="vl" style="left:514px;top:360px;height:246px"></div>
<div class="vl" style="left:618px;top:360px;height:246px"></div>
<div class="vl" style="left:36px;top:374px;height:232px;background:#c8c8c8"></div>
<div class="hl" style="left:0;top:392px;width:618px"></div>
<div class="t" style="left:0;top:375px;width:36px;text-align:center">Atom 1</div>
<div class="t" style="left:36px;top:377.7px;width:50px;text-align:center">O</div>
<div class="t" style="left:86px;top:377.7px;width:48px;text-align:center">1</div>
<div class="t" style="left:134px;top:377.7px;width:75px;text-align:center">0</div>
<div class="t" style="left:209px;top:377.7px;width:111px;text-align:center">0.000</div>
<div class="t" style="left:320px;top:377.7px;width:48px;text-align:center">0.0015</div>
<div class="t" style="left:368px;top:377.7px;width:49px;text-align:center">0.8426</div>
<div class="t" style="left:417px;top:377.7px;width:49px;text-align:center">1.2076</div>
<div class="a" style="left:517px;top:378px;width:10px;height:10px;background:#fb1414"></div>
<div class="a" style="left:37px;top:393px;width:581px;height:19px;background:#f7f7f7"></div>
<div class="hl" style="left:0;top:412px;width:618px"></div>
<div class="t" style="left:0;top:394px;width:36px;text-align:center">Atom 2</div>
<div class="t" style="left:36px;top:396.7px;width:50px;text-align:center">C</div>
<div class="t" style="left:86px;top:396.7px;width:48px;text-align:center">3</div>
<div class="t" style="left:134px;top:396.7px;width:75px;text-align:center">0</div>
<div class="t" style="left:209px;top:396.7px;width:111px;text-align:center">0.000</div>
<div class="t" style="left:320px;top:396.7px;width:48px;text-align:center">1.0851</div>
<div class="t" style="left:368px;top:396.7px;width:49px;text-align:center">0.7845</div>
<div class="t" style="left:417px;top:396.7px;width:49px;text-align:center">1.7655</div>
<div class="a" style="left:517px;top:397px;width:10px;height:10px;background:#808080"></div>
<div class="hl" style="left:0;top:431px;width:618px"></div>
<div class="t" style="left:0;top:414px;width:36px;text-align:center">Atom 3</div>
<div class="t" style="left:36px;top:416.7px;width:50px;text-align:center">C</div>
<div class="t" style="left:86px;top:416.7px;width:48px;text-align:center">3</div>
<div class="t" style="left:134px;top:416.7px;width:75px;text-align:center">0</div>
<div class="t" style="left:209px;top:416.7px;width:111px;text-align:center">0.000</div>
<div class="t" style="left:320px;top:416.7px;width:48px;text-align:center">1.2005</div>
<div class="t" style="left:368px;top:416.7px;width:49px;text-align:center">0.3727</div>
<div class="t" style="left:417px;top:416.7px;width:49px;text-align:center">3.1842</div>
<div class="a" style="left:517px;top:417px;width:10px;height:10px;background:#808080"></div>
<div class="a" style="left:37px;top:432px;width:581px;height:19px;background:#f7f7f7"></div>
<div class="hl" style="left:0;top:451px;width:618px"></div>
<div class="t" style="left:0;top:433px;width:36px;text-align:center">Atom 4</div>
<div class="t" style="left:36px;top:435.7px;width:50px;text-align:center">C</div>
<div class="t" style="left:86px;top:435.7px;width:48px;text-align:center">3</div>
<div class="t" style="left:134px;top:435.7px;width:75px;text-align:center">0</div>
<div class="t" style="left:209px;top:435.7px;width:111px;text-align:center">1.000</div>
<div class="t" style="left:320px;top:435.7px;width:48px;text-align:center">2.3387</div>
<div class="t" style="left:368px;top:435.7px;width:49px;text-align:center">1.1233</div>
<div class="t" style="left:417px;top:435.7px;width:49px;text-align:center">1.0520</div>
<div class="a" style="left:517px;top:436px;width:10px;height:10px;background:#808080"></div>
<div class="hl" style="left:0;top:470px;width:618px"></div>
<div class="t" style="left:0;top:453px;width:36px;text-align:center">Atom 5</div>
<div class="t" style="left:36px;top:455.7px;width:50px;text-align:center">C</div>
<div class="t" style="left:86px;top:455.7px;width:48px;text-align:center">3</div>
<div class="t" style="left:134px;top:455.7px;width:75px;text-align:center">0</div>
<div class="t" style="left:209px;top:455.7px;width:111px;text-align:center">0.000</div>
<div class="t" style="left:320px;top:455.7px;width:48px;text-align:center">2.3908</div>
<div class="t" style="left:368px;top:455.7px;width:49px;text-align:center">0.3098</div>
<div class="t" style="left:417px;top:455.7px;width:49px;text-align:center">3.7974</div>
<div class="a" style="left:517px;top:456px;width:10px;height:10px;background:#808080"></div>
<div class="a" style="left:37px;top:471px;width:581px;height:19px;background:#f7f7f7"></div>
<div class="hl" style="left:0;top:490px;width:618px"></div>
<div class="t" style="left:0;top:472px;width:36px;text-align:center">Atom 6</div>
<div class="t" style="left:36px;top:474.7px;width:50px;text-align:center">C</div>
<div class="t" style="left:86px;top:474.7px;width:48px;text-align:center">3</div>
<div class="t" style="left:134px;top:474.7px;width:75px;text-align:center">0</div>
<div class="t" style="left:209px;top:474.7px;width:111px;text-align:center">0.000</div>
<div class="t" style="left:320px;top:474.7px;width:48px;text-align:center">3.5290</div>
<div class="t" style="left:368px;top:474.7px;width:49px;text-align:center">1.0604</div>
<div class="t" style="left:417px;top:474.7px;width:49px;text-align:center">1.6652</div>
<div class="a" style="left:517px;top:475px;width:10px;height:10px;background:#808080"></div>
<div class="hl" style="left:0;top:509px;width:618px"></div>
<div class="t" style="left:0;top:492px;width:36px;text-align:center">Atom 7</div>
<div class="t" style="left:36px;top:494.7px;width:50px;text-align:center">C</div>
<div class="t" style="left:86px;top:494.7px;width:48px;text-align:center">3</div>
<div class="t" style="left:134px;top:494.7px;width:75px;text-align:center">0</div>
<div class="t" style="left:209px;top:494.7px;width:111px;text-align:center">0.000</div>
<div class="t" style="left:320px;top:494.7px;width:48px;text-align:center">3.6444</div>
<div class="t" style="left:368px;top:494.7px;width:49px;text-align:center">0.6486</div>
<div class="t" style="left:417px;top:494.7px;width:49px;text-align:center">3.0839</div>
<div class="a" style="left:517px;top:495px;width:10px;height:10px;background:#808080"></div>
<div class="a" style="left:37px;top:510px;width:581px;height:18px;background:#f7f7f7"></div>
<div class="hl" style="left:0;top:528px;width:618px"></div>
<div class="t" style="left:0;top:511px;width:36px;text-align:center">Atom 8</div>
<div class="t" style="left:36px;top:513.7px;width:50px;text-align:center">O</div>
<div class="t" style="left:86px;top:513.7px;width:48px;text-align:center">1</div>
<div class="t" style="left:134px;top:513.7px;width:75px;text-align:center">0</div>
<div class="t" style="left:209px;top:513.7px;width:111px;text-align:center">1.000</div>
<div class="t" style="left:320px;top:513.7px;width:48px;text-align:center">4.7280</div>
<div class="t" style="left:368px;top:513.7px;width:49px;text-align:center">0.5905</div>
<div class="t" style="left:417px;top:513.7px;width:49px;text-align:center">3.6418</div>
<div class="a" style="left:517px;top:514px;width:10px;height:10px;background:#fb1414"></div>
<div class="hl" style="left:0;top:548px;width:618px"></div>
<div class="t" style="left:0;top:530px;width:36px;text-align:center">Atom 9</div>
<div class="t" style="left:36px;top:532.7px;width:50px;text-align:center">H</div>
<div class="t" style="left:86px;top:532.7px;width:48px;text-align:center">1</div>
<div class="t" style="left:134px;top:532.7px;width:75px;text-align:center">0</div>
<div class="t" style="left:209px;top:532.7px;width:111px;text-align:center">0.000</div>
<div class="t" style="left:320px;top:532.7px;width:48px;text-align:center">0.2673</div>
<div class="t" style="left:368px;top:532.7px;width:49px;text-align:center">0.1294</div>
<div class="t" style="left:417px;top:532.7px;width:49px;text-align:center">3.6848</div>
<div class="a" style="left:517px;top:533px;width:10px;height:10px;background:#f0f0f0"></div>
<div class="a" style="left:37px;top:549px;width:581px;height:18px;background:#f7f7f7"></div>
<div class="hl" style="left:0;top:567px;width:618px"></div>
<div class="t" style="left:0;top:550px;width:36px;text-align:center">Atom 10</div>
<div class="t" style="left:36px;top:552.7px;width:50px;text-align:center">H</div>
<div class="t" style="left:86px;top:552.7px;width:48px;text-align:center">1</div>
<div class="t" style="left:134px;top:552.7px;width:75px;text-align:center">0</div>
<div class="t" style="left:209px;top:552.7px;width:111px;text-align:center">0.000</div>
<div class="t" style="left:320px;top:552.7px;width:48px;text-align:center">2.2274</div>
<div class="t" style="left:368px;top:552.7px;width:49px;text-align:center">1.4220</div>
<div class="t" style="left:417px;top:552.7px;width:49px;text-align:center">0.0132</div>
<div class="a" style="left:517px;top:553px;width:10px;height:10px;background:#f0f0f0"></div>
<div class="hl" style="left:0;top:587px;width:618px"></div>
<div class="t" style="left:0;top:569px;width:36px;text-align:center">Atom 11</div>
<div class="t" style="left:36px;top:571.7px;width:50px;text-align:center">H</div>
<div class="t" style="left:86px;top:571.7px;width:48px;text-align:center">1</div>
<div class="t" style="left:134px;top:571.7px;width:75px;text-align:center">0</div>
<div class="t" style="left:209px;top:571.7px;width:111px;text-align:center">0.000</div>
<div class="t" style="left:320px;top:571.7px;width:48px;text-align:center">2.5021</div>
<div class="t" style="left:368px;top:571.7px;width:49px;text-align:center">0.0112</div>
<div class="t" style="left:417px;top:571.7px;width:49px;text-align:center">4.8362</div>
<div class="a" style="left:517px;top:572px;width:10px;height:10px;background:#f0f0f0"></div>
<div class="a" style="left:37px;top:588px;width:581px;height:18px;background:#f7f7f7"></div>
<div class="hl" style="left:0;top:606px;width:618px"></div>
<div class="t" style="left:0;top:589px;width:36px;text-align:center">Atom 12</div>
<div class="t" style="left:36px;top:591.7px;width:50px;text-align:center">H</div>
<div class="t" style="left:86px;top:591.7px;width:48px;text-align:center">1</div>
<div class="t" style="left:134px;top:591.7px;width:75px;text-align:center">0</div>
<div class="t" style="left:209px;top:591.7px;width:111px;text-align:center">1.000</div>
<div class="t" style="left:320px;top:591.7px;width:48px;text-align:center">4.4622</div>
<div class="t" style="left:368px;top:591.7px;width:49px;text-align:center">1.3037</div>
<div class="t" style="left:417px;top:591.7px;width:49px;text-align:center">1.1647</div>
<div class="a" style="left:517px;top:592px;width:10px;height:10px;background:#f0f0f0"></div>
<div class="vl" style="left:86px;top:374px;height:232px"></div>
<div class="vl" style="left:134px;top:374px;height:232px"></div>
<div class="vl" style="left:209px;top:374px;height:232px"></div>
<div class="vl" style="left:320px;top:374px;height:232px"></div>
<div class="vl" style="left:368px;top:374px;height:232px"></div>
<div class="vl" style="left:417px;top:374px;height:232px"></div>
<div class="vl" style="left:466px;top:374px;height:232px"></div>
<div class="vl" style="left:514px;top:374px;height:232px"></div>
<div class="vl" style="left:618px;top:374px;height:232px"></div>
<div class="a" style="left:0;top:697px;width:1035px;height:2px;background:#e6e6e6"></div>
<div class="a" style="left:622px;top:18px;width:1px;height:681px;background:#6674b8"></div>
<div class="a" style="left:622px;top:343px;width:1px;height:356px;background:#2a2e36"></div>
<div class="a" style="left:623px;top:343px;width:1px;height:356px;background:#b8b8b8"></div>
<div class="a" style="left:0;top:18px;width:1px;height:341px;background:#a6add0"></div>
<div class="a" style="left:594px;top:101px;width:441px;height:535px;background:#000"></div>
<div class="a" style="left:594px;top:101px;width:441px;height:17px;background:#2e2e2e"></div>
<div class="a mono" style="left:601.3px;top:102.5px;font-size:13.5px;line-height:15px;color:#9a9a46;white-space:pre;transform-origin:0 0;transform:scaleX(0.8023);">[mo…</div>
<div class="a mono" style="left:630.2px;top:100.4px;font-size:20px;line-height:20px;color:#444;transform-origin:0 0;transform:scaleX(.78)">×</div>
<div class="a mono" style="left:647.9px;top:102.5px;font-size:13.5px;line-height:15px;color:#9a9a46;white-space:pre;transform-origin:0 0;transform:scaleX(0.8023);">his…</div>
<div class="a mono" style="left:676.8px;top:100.4px;font-size:20px;line-height:20px;color:#444;transform-origin:0 0;transform:scaleX(.78)">×</div>
<div class="a mono" style="left:694.5px;top:102.5px;font-size:13.5px;line-height:15px;color:#d2dcae;white-space:pre;transform-origin:0 0;transform:scaleX(0.8023);">his…</div>
<div class="a mono" style="left:723.4px;top:100.4px;font-size:20px;line-height:20px;color:#444;transform-origin:0 0;transform:scaleX(.78)">×</div>
<div class="a mono" style="left:741.2px;top:102.5px;font-size:13.5px;line-height:15px;color:#7a7a7a;white-space:pre;transform-origin:0 0;transform:scaleX(0.8023);">Mph…</div>
<div class="a mono" style="left:770.1px;top:100.4px;font-size:20px;line-height:20px;color:#444;transform-origin:0 0;transform:scaleX(.78)">×</div>
<div class="a mono" style="left:787.8px;top:102.5px;font-size:13.5px;line-height:15px;color:#7a7a7a;white-space:pre;transform-origin:0 0;transform:scaleX(0.8023);">BQ_…</div>
<div class="a mono" style="left:816.7px;top:100.4px;font-size:20px;line-height:20px;color:#444;transform-origin:0 0;transform:scaleX(.78)">×</div>
<div class="a mono" style="left:834.4px;top:102.5px;font-size:13.5px;line-height:15px;color:#7a7a7a;white-space:pre;transform-origin:0 0;transform:scaleX(0.8023);">BQ_…</div>
<div class="a mono" style="left:863.3px;top:100.4px;font-size:20px;line-height:20px;color:#444;transform-origin:0 0;transform:scaleX(.78)">×</div>
<div class="a mono" style="left:881.0px;top:102.5px;font-size:13.5px;line-height:15px;color:#7a7a7a;white-space:pre;transform-origin:0 0;transform:scaleX(0.8023);">his…</div>
<div class="a mono" style="left:909.9px;top:100.4px;font-size:20px;line-height:20px;color:#444;transform-origin:0 0;transform:scaleX(.78)">×</div>
<div class="a mono" style="left:927.6px;top:102.5px;font-size:13.5px;line-height:15px;color:#7a7a7a;white-space:pre;transform-origin:0 0;transform:scaleX(0.8023);">his…</div>
<div class="a mono" style="left:956.5px;top:100.4px;font-size:20px;line-height:20px;color:#444;transform-origin:0 0;transform:scaleX(.78)">×</div>
<div class="a mono" style="left:974.3px;top:102.5px;font-size:13.5px;line-height:15px;color:#9a9a46;white-space:pre;transform-origin:0 0;transform:scaleX(0.8023);">his…</div>
<div class="a mono" style="left:1003.2px;top:100.4px;font-size:20px;line-height:20px;color:#444;transform-origin:0 0;transform:scaleX(.78)">×</div>
<div class="a mono" style="left:1020.9px;top:102.5px;font-size:13.5px;line-height:15px;color:#7a7a7a;white-space:pre;transform-origin:0 0;transform:scaleX(0.8023);">hi</div>
<div class="a mono" style="left:606.8px;top:131.5px;font-size:13.5px;line-height:15px;color:#a86a62;white-space:pre;transform-origin:0 0;transform:scaleX(0.8023);">31</div>
<div class="a mono" style="left:626.3px;top:131.5px;font-size:13.5px;line-height:15px;color:#b6b6b6;white-space:pre;transform-origin:0 0;transform:scaleX(0.8023);">B(  0-O ,  1-C ) :   1.7898 B(  1-C ,  2-C ) :   1.0401 B(  1-C</div>
<div class="a mono" style="left:606.8px;top:146.4px;font-size:13.5px;line-height:15px;color:#a86a62;white-space:pre;transform-origin:0 0;transform:scaleX(0.8023);">30</div>
<div class="a mono" style="left:626.3px;top:146.4px;font-size:13.5px;line-height:15px;color:#b6b6b6;white-space:pre;transform-origin:0 0;transform:scaleX(0.8023);">B(  2-C ,  4-C ) :   1.7536 B(  2-C ,  8-H ) :   0.9082 B(  3-C</div>
<div class="a mono" style="left:606.8px;top:161.3px;font-size:13.5px;line-height:15px;color:#a86a62;white-space:pre;transform-origin:0 0;transform:scaleX(0.8023);">29</div>
<div class="a mono" style="left:626.3px;top:161.3px;font-size:13.5px;line-height:15px;color:#b6b6b6;white-space:pre;transform-origin:0 0;transform:scaleX(0.8023);">B(  3-C ,  9-H ) :   0.9082 B(  4-C ,  6-C ) :   1.0401 B(  4-C</div>
<div class="a mono" style="left:606.8px;top:176.2px;font-size:13.5px;line-height:15px;color:#a86a62;white-space:pre;transform-origin:0 0;transform:scaleX(0.8023);">28</div>
<div class="a mono" style="left:626.3px;top:176.2px;font-size:13.5px;line-height:15px;color:#b6b6b6;white-space:pre;transform-origin:0 0;transform:scaleX(0.8023);">B(  5-C ,  6-C ) :   1.0401 B(  5-C , 11-H ) :   0.9082 B(  6-C</div>
<div class="a mono" style="left:606.8px;top:191.1px;font-size:13.5px;line-height:15px;color:#a86a62;white-space:pre;transform-origin:0 0;transform:scaleX(0.8023);">27</div>
<div class="a mono" style="left:606.8px;top:206.0px;font-size:13.5px;line-height:15px;color:#a86a62;white-space:pre;transform-origin:0 0;transform:scaleX(0.8023);">26</div>
<div class="a mono" style="left:606.8px;top:220.9px;font-size:13.5px;line-height:15px;color:#a86a62;white-space:pre;transform-origin:0 0;transform:scaleX(0.8023);">25</div>
<div class="a mono" style="left:606.8px;top:235.8px;font-size:13.5px;line-height:15px;color:#a86a62;white-space:pre;transform-origin:0 0;transform:scaleX(0.8023);">24</div>
<div class="a mono" style="left:626.3px;top:235.8px;font-size:13.5px;line-height:15px;color:#b6b6b6;white-space:pre;transform-origin:0 0;transform:scaleX(0.8023);">------------------</div>
<div class="a mono" style="left:606.8px;top:250.7px;font-size:13.5px;line-height:15px;color:#a86a62;white-space:pre;transform-origin:0 0;transform:scaleX(0.8023);">23</div>
<div class="a mono" style="left:626.3px;top:250.7px;font-size:13.5px;line-height:15px;color:#b6b6b6;white-space:pre;transform-origin:0 0;transform:scaleX(0.8023);">HIRSHFELD ANALYSIS</div>
<div class="a mono" style="left:606.8px;top:265.6px;font-size:13.5px;line-height:15px;color:#a86a62;white-space:pre;transform-origin:0 0;transform:scaleX(0.8023);">22</div>
<div class="a mono" style="left:626.3px;top:265.6px;font-size:13.5px;line-height:15px;color:#b6b6b6;white-space:pre;transform-origin:0 0;transform:scaleX(0.8023);">------------------</div>
<div class="a mono" style="left:606.8px;top:280.5px;font-size:13.5px;line-height:15px;color:#a86a62;white-space:pre;transform-origin:0 0;transform:scaleX(0.8023);">21</div>
<div class="a mono" style="left:606.8px;top:295.4px;font-size:13.5px;line-height:15px;color:#a86a62;white-space:pre;transform-origin:0 0;transform:scaleX(0.8023);">20</div>
<div class="a mono" style="left:626.3px;top:295.4px;font-size:13.5px;line-height:15px;color:#b6b6b6;white-space:pre;transform-origin:0 0;transform:scaleX(0.8023);">Total integrated alpha density =     28.000032458</div>
<div class="a mono" style="left:606.8px;top:310.3px;font-size:13.5px;line-height:15px;color:#a86a62;white-space:pre;transform-origin:0 0;transform:scaleX(0.8023);">19</div>
<div class="a mono" style="left:626.3px;top:310.3px;font-size:13.5px;line-height:15px;color:#b6b6b6;white-space:pre;transform-origin:0 0;transform:scaleX(0.8023);">Total integrated beta density  =     28.000032458</div>
<div class="a mono" style="left:606.8px;top:325.2px;font-size:13.5px;line-height:15px;color:#a86a62;white-space:pre;transform-origin:0 0;transform:scaleX(0.8023);">18</div>
<div class="a mono" style="left:606.8px;top:340.1px;font-size:13.5px;line-height:15px;color:#a86a62;white-space:pre;transform-origin:0 0;transform:scaleX(0.8023);">17</div>
<div class="a mono" style="left:626.3px;top:340.1px;font-size:13.5px;line-height:15px;color:#b6b6b6;white-space:pre;transform-origin:0 0;transform:scaleX(0.8023);">  ATOM     CHARGE      SPIN</div>
<div class="a mono" style="left:606.8px;top:355.0px;font-size:13.5px;line-height:15px;color:#a86a62;white-space:pre;transform-origin:0 0;transform:scaleX(0.8023);">16</div>
<div class="a mono" style="left:626.3px;top:355.0px;font-size:13.5px;line-height:15px;color:#b6b6b6;white-space:pre;transform-origin:0 0;transform:scaleX(0.8023);">   0 O   -0.239280    0.000000</div>
<div class="a mono" style="left:606.8px;top:369.9px;font-size:13.5px;line-height:15px;color:#a86a62;white-space:pre;transform-origin:0 0;transform:scaleX(0.8023);">15</div>
<div class="a mono" style="left:626.3px;top:369.9px;font-size:13.5px;line-height:15px;color:#b6b6b6;white-space:pre;transform-origin:0 0;transform:scaleX(0.8023);">   1 C    0.153017    0.000000</div>
<div class="a mono" style="left:606.8px;top:384.8px;font-size:13.5px;line-height:15px;color:#a86a62;white-space:pre;transform-origin:0 0;transform:scaleX(0.8023);">14</div>
<div class="a mono" style="left:626.3px;top:384.8px;font-size:13.5px;line-height:15px;color:#b6b6b6;white-space:pre;transform-origin:0 0;transform:scaleX(0.8023);">   2 C   -0.019426    0.000000</div>
<div class="a mono" style="left:606.8px;top:399.7px;font-size:13.5px;line-height:15px;color:#a86a62;white-space:pre;transform-origin:0 0;transform:scaleX(0.8023);">13</div>
<div class="a mono" style="left:626.3px;top:399.7px;font-size:13.5px;line-height:15px;color:#b6b6b6;white-space:pre;transform-origin:0 0;transform:scaleX(0.8023);">   3 C   -0.019394    0.000000</div>
<div class="a mono" style="left:606.8px;top:414.6px;font-size:13.5px;line-height:15px;color:#a86a62;white-space:pre;transform-origin:0 0;transform:scaleX(0.8023);">12</div>
<div class="a mono" style="left:626.3px;top:414.6px;font-size:13.5px;line-height:15px;color:#b6b6b6;white-space:pre;transform-origin:0 0;transform:scaleX(0.8023);">   4 C   -0.019394    0.000000</div>
<div class="a mono" style="left:606.8px;top:429.5px;font-size:13.5px;line-height:15px;color:#a86a62;white-space:pre;transform-origin:0 0;transform:scaleX(0.8023);">11</div>
<div class="a mono" style="left:626.3px;top:429.5px;font-size:13.5px;line-height:15px;color:#b6b6b6;white-space:pre;transform-origin:0 0;transform:scaleX(0.8023);">   5 C   -0.019426    0.000000</div>
<div class="a mono" style="left:606.8px;top:444.4px;font-size:13.5px;line-height:15px;color:#a86a62;white-space:pre;transform-origin:0 0;transform:scaleX(0.8023);">10</div>
<div class="a mono" style="left:626.3px;top:444.4px;font-size:13.5px;line-height:15px;color:#b6b6b6;white-space:pre;transform-origin:0 0;transform:scaleX(0.8023);">   6 C    0.153017    0.000000</div>
<div class="a mono" style="left:606.8px;top:459.3px;font-size:13.5px;line-height:15px;color:#a86a62;white-space:pre;transform-origin:0 0;transform:scaleX(0.8023);"> 9</div>
<div class="a mono" style="left:626.3px;top:459.3px;font-size:13.5px;line-height:15px;color:#b6b6b6;white-space:pre;transform-origin:0 0;transform:scaleX(0.8023);">   7 O   -0.239280    0.000000</div>
<div class="a mono" style="left:606.8px;top:474.2px;font-size:13.5px;line-height:15px;color:#a86a62;white-space:pre;transform-origin:0 0;transform:scaleX(0.8023);"> 8</div>
<div class="a mono" style="left:626.3px;top:474.2px;font-size:13.5px;line-height:15px;color:#b6b6b6;white-space:pre;transform-origin:0 0;transform:scaleX(0.8023);">   8 H    0.062527    0.000000</div>
<div class="a mono" style="left:606.8px;top:489.1px;font-size:13.5px;line-height:15px;color:#a86a62;white-space:pre;transform-origin:0 0;transform:scaleX(0.8023);"> 7</div>
<div class="a mono" style="left:626.3px;top:489.1px;font-size:13.5px;line-height:15px;color:#b6b6b6;white-space:pre;transform-origin:0 0;transform:scaleX(0.8023);">   9 H    0.062524    0.000000</div>
<div class="a mono" style="left:606.8px;top:504.0px;font-size:13.5px;line-height:15px;color:#a86a62;white-space:pre;transform-origin:0 0;transform:scaleX(0.8023);"> 6</div>
<div class="a mono" style="left:626.3px;top:504.0px;font-size:13.5px;line-height:15px;color:#b6b6b6;white-space:pre;transform-origin:0 0;transform:scaleX(0.8023);">  10 H    0.062524    0.000000</div>
<div class="a mono" style="left:606.8px;top:518.9px;font-size:13.5px;line-height:15px;color:#a86a62;white-space:pre;transform-origin:0 0;transform:scaleX(0.8023);"> 5</div>
<div class="a mono" style="left:626.3px;top:518.9px;font-size:13.5px;line-height:15px;color:#b6b6b6;white-space:pre;transform-origin:0 0;transform:scaleX(0.8023);">  11 H    0.062527    0.000000</div>
<div class="a mono" style="left:606.8px;top:533.8px;font-size:13.5px;line-height:15px;color:#a86a62;white-space:pre;transform-origin:0 0;transform:scaleX(0.8023);"> 4</div>
<div class="a mono" style="left:606.8px;top:548.7px;font-size:13.5px;line-height:15px;color:#a86a62;white-space:pre;transform-origin:0 0;transform:scaleX(0.8023);"> 3</div>
<div class="a mono" style="left:626.3px;top:548.7px;font-size:13.5px;line-height:15px;color:#b6b6b6;white-space:pre;transform-origin:0 0;transform:scaleX(0.8023);">  TOTAL  -0.000065    0.000000</div>
<div class="a mono" style="left:606.8px;top:563.6px;font-size:13.5px;line-height:15px;color:#a86a62;white-space:pre;transform-origin:0 0;transform:scaleX(0.8023);"> 2</div>
<div class="a mono" style="left:606.8px;top:578.5px;font-size:13.5px;line-height:15px;color:#a86a62;white-space:pre;transform-origin:0 0;transform:scaleX(0.8023);"> 1</div>
<div class="a mono" style="left:626.3px;top:578.5px;font-size:13.5px;line-height:15px;color:#b6b6b6;white-space:pre;transform-origin:0 0;transform:scaleX(0.8023);">-------</div>
<div class="a mono" style="left:606.8px;top:593.4px;font-size:13.5px;line-height:15px;color:#a86a62;white-space:pre;transform-origin:0 0;transform:scaleX(0.8023);"> 0</div>
<div class="a mono" style="left:626.3px;top:593.4px;font-size:13.5px;line-height:15px;color:#b6b6b6;white-space:pre;transform-origin:0 0;transform:scaleX(0.8023);">TIMINGS</div>
<div class="a" style="left:625.4px;top:591.6px;width:6.5px;height:15px;border:1px solid #b4b4b4"></div>
</div></body></html>
